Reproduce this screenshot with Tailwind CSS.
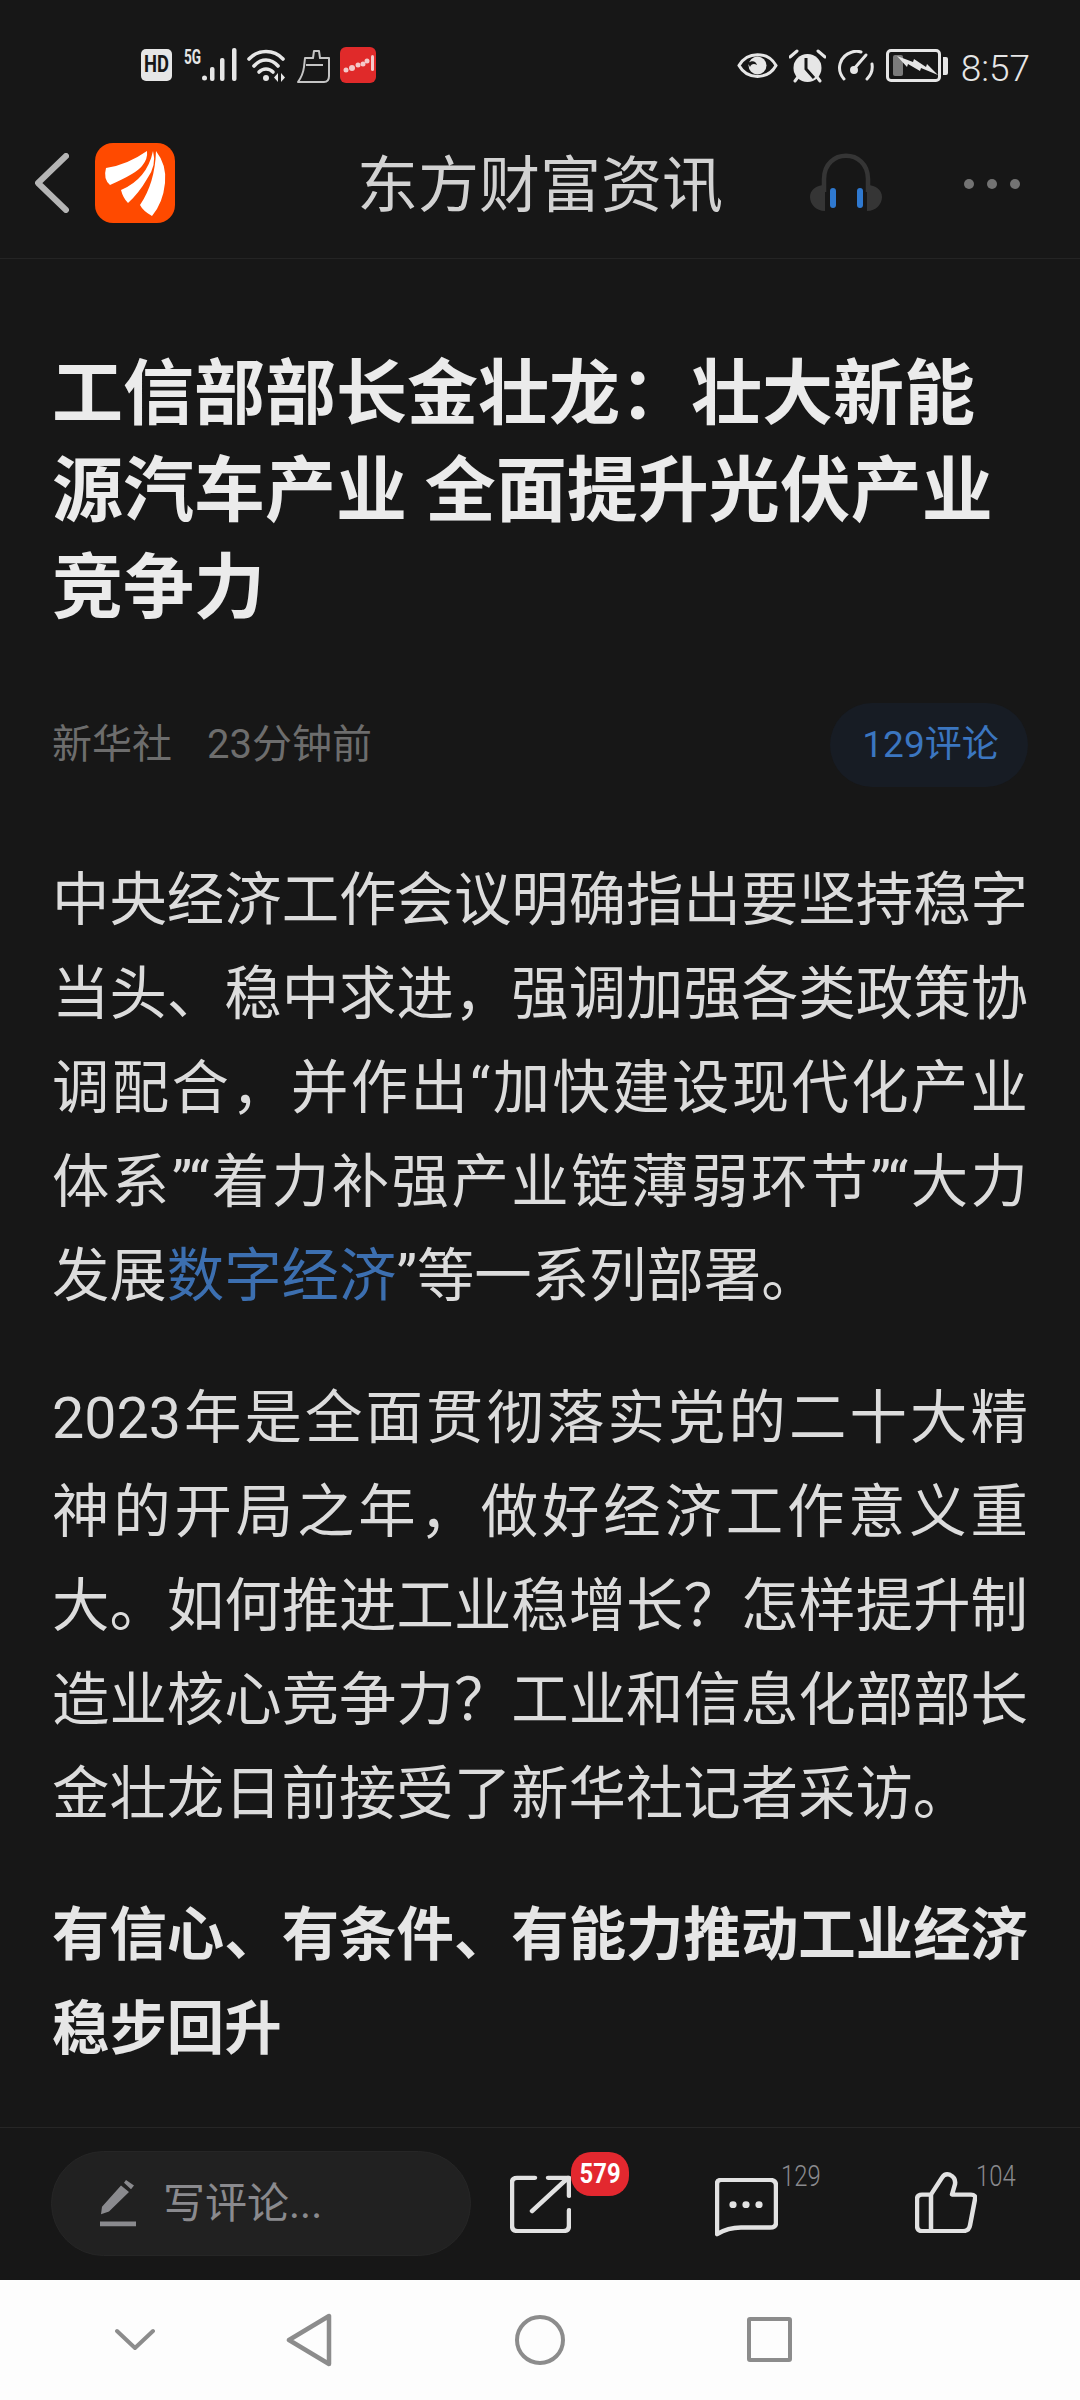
<!DOCTYPE html>
<html lang="zh-CN">
<head>
    <meta charset="UTF-8">
    <meta name="viewport" content="width=device-width, initial-scale=1.0">
    <title>东方财富资讯</title>
    <script src="https://cdn.jsdelivr.net/npm/@tailwindcss/browser@4"></script>
</head>
<body class="bg-[#171717] font-['Roboto','Noto_Sans_CJK_SC',sans-serif]">
<div class="w-[1080px] h-[2400px] flex flex-col overflow-hidden">

    <!-- status bar -->
    <div class="h-[130px] shrink-0 flex items-start pt-[47px] pl-[141px] pr-[50px] text-[#e6e6e6]">
        <div class="w-[31px] h-[32px] mt-[2px] rounded-[5px] bg-[#e6e6e6] text-[#171717] text-[23px] font-bold flex items-center justify-center"><span class="scale-x-[0.8]">HD</span></div>
        <div class="relative w-[53px] h-[36px] ml-[12px]">
            <span class="absolute left-0 top-0 text-[20px] leading-[20px] font-bold origin-left scale-x-[0.68]">5G</span>
            <svg class="absolute left-[18px] top-[1px]" width="35" height="34" viewBox="0 0 35 34" fill="#e6e6e6">
                <circle cx="2.500" cy="30" r="2.500"/><rect x="8" y="19" width="4.500" height="14" rx="2"/><rect x="18" y="10" width="4.500" height="23" rx="2"/><rect x="30" y="0" width="4.500" height="33" rx="2"/>
            </svg>
        </div>
        <svg class="ml-[10px] mt-[1px]" width="40" height="34" viewBox="0 0 40 34" fill="none" stroke="#e6e6e6" stroke-width="3.600" stroke-linecap="round">
            <path d="M2 11C11 1 27 1 36 11"/><path d="M7 18C14 10 24 10 31 18"/><path d="M12 24C16 20 22 20 26 24"/>
            <circle cx="19" cy="30" r="3" fill="#e6e6e6" stroke="none"/>
            <path d="M31 25l-4 4.500 4 4.500zM34 25l4 4.500-4 4.500z" fill="#e6e6e6" stroke="none"/>
        </svg>
        <svg class="ml-[9px] mt-[2px]" width="35" height="35" viewBox="0 0 35 35" fill="none" stroke="#c4c4c4" stroke-width="2" stroke-linejoin="round">
            <path d="M9 9H17L18 2H23L24 9H33V27Q33 33 28 33H2Q7 26 8 18Z"/><path d="M10 16H27"/>
        </svg>
        <svg class="ml-[9px]" width="36" height="36" viewBox="0 0 36 36">
            <rect width="36" height="36" rx="6" fill="#e02a2a"/>
            <g fill="#f4c9c9"><circle cx="6" cy="23" r="2.500"/><circle cx="12" cy="21" r="3"/><circle cx="18" cy="18" r="2.500"/><circle cx="23" cy="17" r="2.500"/><circle cx="27" cy="14" r="2.500"/><rect x="31" y="8" width="3" height="16" rx="1.500"/></g>
        </svg>

        <svg class="ml-auto mt-[5px]" width="41" height="27" viewBox="0 0 41 27">
            <path d="M2 13.500C10 -1 31 -1 39 13.500C31 28 10 28 2 13.500Z" fill="none" stroke="#e6e6e6" stroke-width="3"/>
            <circle cx="20.500" cy="13.500" r="9" fill="#e6e6e6"/><path d="M11 11C15 8 19 9 20 13C17 11 14 12 13 15Z" fill="#171717"/>
        </svg>
        <svg class="ml-[11px] mt-[2px]" width="37" height="34" viewBox="0 0 37 34">
            <circle cx="18.500" cy="19" r="14" fill="#e6e6e6"/>
            <path d="M17 9V20L25 29" fill="none" stroke="#171717" stroke-width="3"/>
            <path d="M1 8L8 2M36 8L29 2" stroke="#e6e6e6" stroke-width="3" stroke-linecap="round"/>
            <path d="M6 32l3-4M31 32l-3-4" stroke="#e6e6e6" stroke-width="3" stroke-linecap="round"/>
        </svg>
        <svg class="ml-[11px] mt-[3px]" width="37" height="31" viewBox="0 0 37 31" fill="none" stroke="#e6e6e6" stroke-width="3" stroke-linecap="round">
            <path d="M7 29C-1 20 2 6 15 2C18 1 21 1 24 2"/><path d="M30 29C34 25 36 20 35 14"/><path d="M16 20L29 5" stroke-width="3"/><circle cx="17" cy="20" r="2.500" fill="#e6e6e6"/>
        </svg>
        <div class="ml-[12px] mt-[2px] w-[55px] h-[33px] border-[3px] border-[#e6e6e6] rounded-[5px] relative">
            <div class="absolute left-[4px] top-[3px] w-[10px] h-[21px] rounded-[2px] bg-[#7b7b7b]"></div>
            <svg class="absolute left-[5px] top-[4px]" width="44" height="20" viewBox="0 0 44 20"><path d="M3 0L19 6L20 3L32 11L33 8L44 19L27 12L26 15L14 8L13 11Z" fill="#e6e6e6"/></svg>
        </div>
        <div class="ml-[2px] mt-[10px] w-[5px] h-[18px] rounded-r-[2px] bg-[#e6e6e6]"></div>
        <div class="ml-[13px] mt-[1px] text-[37px] leading-[42px] font-light text-[#e6e6e6]">8:57</div>
    </div>

    <!-- header -->
    <div class="h-[129px] shrink-0 relative flex items-start border-b border-[#242424] pl-[35px] pr-[52px]">
        <svg class="mt-[23px]" width="34" height="60" viewBox="0 0 34 60" fill="none" stroke="#b5b5b5" stroke-width="6" stroke-linecap="round" stroke-linejoin="round"><path d="M31 3L3 30L31 57"/></svg>
        <div class="ml-[26px] mt-[13px] w-[80px] h-[80px] rounded-[18px] bg-[#ff4a00]">
            <svg width="80" height="80" viewBox="0 0 80 80" fill="#fff">
                <path d="M11 25Q32 22 52 8Q53 16 47 23Q42 30 15 42Q8 36 11 25Z"/>
                <path d="M58 8Q62 22 52 36Q44 50 33 60Q28 55 26 47Q52 36 58 8Z"/>
                <path d="M61 8Q72 22 70 40Q68 60 57 73Q48 68 45 62Q60 40 61 8Z"/>
            </svg>
        </div>
        <div class="absolute left-0 right-0 top-[18px] text-center text-[61px] leading-[76px] text-[#d2d2d2]">东方财富资讯</div>
        <svg class="ml-[635px] mt-[22px]" width="72" height="60" viewBox="0 0 72 60">
            <path d="M14 40V27C14 -4 58 -4 58 27V40" fill="none" stroke="#353535" stroke-width="4.500"/>
            <path d="M15 33V59C6 59 0 52 0 45S6 33 15 33ZM57 33C66 33 72 38 72 45S66 59 57 59Z" fill="#353535"/>
            <rect x="20" y="36" width="6" height="20" rx="3" fill="#2f79d0"/><rect x="47" y="36" width="6" height="20" rx="3" fill="#2f79d0"/>
        </svg>
        <div class="absolute left-[964px] top-[49px] flex gap-[13px]">
            <div class="w-[10px] h-[10px] rounded-full bg-[#737373]"></div>
            <div class="w-[10px] h-[10px] rounded-full bg-[#737373]"></div>
            <div class="w-[10px] h-[10px] rounded-full bg-[#737373]"></div>
        </div>
    </div>

    <!-- article -->
    <div class="flex-1 overflow-hidden pl-[52px] pr-[52px] pt-[86px]">
        <h1 class="text-[71px] leading-[97px] font-bold text-[#ebebeb]">工信部部长金壮龙&#xFF1A;壮大新能源汽车产业 全面提升光伏产业竞争力</h1>

        <div class="mt-[67px] flex items-center justify-between h-[84px]">
            <div class="text-[40px] text-[#6d6d6d] flex gap-[35px]"><span>新华社</span><span>23分钟前</span></div>
            <div class="w-[198px] h-[84px] pl-[3px] rounded-full bg-[#171c24] text-[37px] text-[#3b76c0] flex items-center justify-center">129评论</div>
        </div>

        <p class="mt-[67px] text-[57.4px] leading-[94px] text-[#dcdcdc] text-justify">中央经济工作会议明确指出要坚持稳字当头、稳中求进&#xFF0C;强调加强各类政策协调配合&#xFF0C;并作出“加快建设现代化产业体系”“着力补强产业链薄弱环节”“大力发展<span class="text-[#3c6fb0]">数字经济</span>”等一系列部署。</p>
        <p class="mt-[48px] text-[57.4px] leading-[94px] text-[#dcdcdc] text-justify">2023年是全面贯彻落实党的二十大精神的开局之年&#xFF0C;做好经济工作意义重大。如何推进工业稳增长&#xFF1F;怎样提升制造业核心竞争力&#xFF1F;工业和信息化部部长金壮龙日前接受了新华社记者采访。</p>
        <p class="mt-[47px] text-[57.4px] leading-[94px] font-bold text-[#e6e6e6] text-justify">有信心、有条件、有能力推动工业经济稳步回升</p>
    </div>

    <!-- bottom bar -->
    <div class="h-[153px] shrink-0 relative border-t border-[#262626] flex items-start pt-[23px] pl-[51px]">
        <div class="w-[420px] h-[105px] rounded-full bg-[#212121] border border-[#262626] flex items-center pl-[48px]">
            <svg width="36" height="48" viewBox="0 0 36 52" fill="#8a8a8e" preserveAspectRatio="none"><path d="M1 37L2 29L21 6L29 13L9 34ZM24 3L26 0L34 6L31 10ZM0 45H36V50H0Z"/></svg>
            <span class="ml-[27px] text-[42px] text-[#8a8a8e]">写评论...</span>
        </div>
        <svg class="ml-[39px] mt-[24px]" width="61" height="58" viewBox="0 0 61 61" preserveAspectRatio="none" fill="none" stroke="#e2e2e2" stroke-width="4.500" stroke-linecap="round" stroke-linejoin="round">
            <path d="M25 3H7Q2 3 2 8V53Q2 59 8 59H53Q59 59 59 53V37"/><path d="M22 38L58 3M38 3H59V22"/>
        </svg>
        <div class="absolute left-[571px] top-[24px] w-[58px] h-[44px] rounded-[20px] bg-[#e3282f] text-white text-[28px] font-bold flex items-center justify-center"><span class="scale-x-[0.85]">579</span></div>
        <svg class="ml-[144px] mt-[27px]" width="63" height="59" viewBox="0 0 63 62" preserveAspectRatio="none" fill="none" stroke="#e2e2e2" stroke-width="4.500" stroke-linejoin="round">
            <path d="M6 2H55Q61 2 61 8V47Q61 52 55 52H26Q13 52 2 59V6Q2 2 6 2Z"/>
            <g fill="#e2e2e2" stroke="none"><circle cx="18" cy="28" r="3.600"/><circle cx="31" cy="28" r="3.600"/><circle cx="44" cy="28" r="3.600"/></g>
        </svg>
        <span class="mt-[8px] ml-[3px] text-[29px] leading-[34px] font-light text-[#8a8a8e] origin-left scale-x-[0.82]">129</span>
        <svg class="absolute left-[915px] top-[44px]" width="62" height="61" viewBox="0 0 62 65" preserveAspectRatio="none" fill="none" stroke="#e2e2e2" stroke-width="4.500" stroke-linejoin="round">
            <path d="M16 24L27 6Q30 1 35 3Q41 6 40 13L37 24H56Q61 24 60 29L55 57Q54 63 48 63H7Q2 63 2 57V29Q2 24 7 24Z"/><path d="M16 24V63"/>
        </svg>
        <span class="absolute left-[976px] top-[31px] text-[29px] leading-[34px] font-light text-[#8a8a8e] origin-left scale-x-[0.82]">104</span>
    </div>

    <!-- nav bar -->
    <div class="h-[120px] shrink-0 bg-[#fdfdfd] relative">
        <svg class="absolute left-[115px] top-[48px]" width="40" height="24" viewBox="0 0 40 24" fill="none" stroke="#8c8c8c" stroke-width="4" stroke-linecap="round" stroke-linejoin="round"><path d="M2 3L20 20L38 3"/></svg>
        <svg class="absolute left-[286px] top-[33px]" width="46" height="54" viewBox="0 0 46 54" fill="none" stroke="#8c8c8c" stroke-width="4.500" stroke-linejoin="round"><path d="M3 27L43 3V51Z"/></svg>
        <div class="absolute left-[515px] top-[35px] w-[50px] h-[50px] rounded-full border-[4px] border-[#8c8c8c]"></div>
        <div class="absolute left-[747px] top-[37px] w-[45px] h-[45px] rounded-[3px] border-[4px] border-[#8c8c8c]"></div>
    </div>
</div>
</body>
</html>
